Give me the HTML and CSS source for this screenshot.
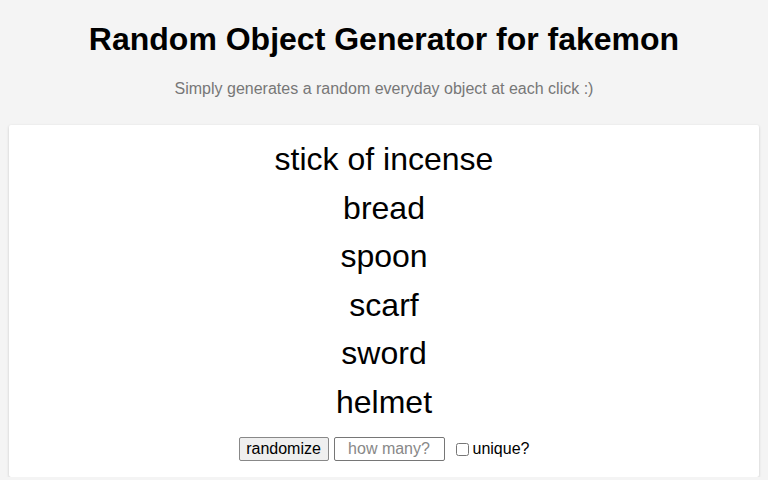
FILE: index.html
```html
<!DOCTYPE html>
<html>
<head>
<meta charset="utf-8">
<title>Random Object Generator for fakemon</title>
<link rel="stylesheet" href="styles.css">
</head>
<body>
<header class="header">
  <h1 class="title">Random Object Generator for fakemon</h1>
  <p class="subtitle">Simply generates a random everyday object at each click :)</p>
</header>
<main class="card">
  <ul class="objects">
    <li>stick of incense</li>
    <li>bread</li>
    <li>spoon</li>
    <li>scarf</li>
    <li>sword</li>
    <li>helmet</li>
  </ul>
  <div class="controls">
    <button class="btn" type="button">randomize</button>
    <input class="count" type="text" placeholder="how many?">
    <label class="unique"><input type="checkbox" class="check">unique?</label>
  </div>
</main>
</body>
</html>
```

FILE: styles.css
```css
html, body {
  margin: 0;
  padding: 0;
}
body {
  background: #f4f4f4;
  font-family: "Liberation Sans", Arial, sans-serif;
  color: #000;
  padding: 0 9px;
}
.header {
  text-align: center;
  padding-top: 21px;
}
.title {
  margin: 0;
  font-size: 32px;
  font-weight: bold;
  line-height: 37px;
}
.subtitle {
  margin: 22px 0 0;
  font-size: 16px;
  line-height: 18px;
  color: #777;
}
.card {
  margin-top: 27px;
  background: #fff;
  border-radius: 2px;
  box-shadow: 0 1px 3px rgba(0,0,0,0.18);
  padding: 10px 0 16px;
  text-align: center;
}
.objects {
  list-style: none;
  margin: 0;
  padding: 0;
}
.objects li {
  font-size: 32px;
  line-height: 48.5px;
}
.controls {
  margin-top: 11px;
  display: flex;
  justify-content: center;
  align-items: center;
  gap: 5px;
  font-size: 16px;
}
.btn {
  font-family: "Liberation Sans", Arial, sans-serif;
  font-size: 16px;
  width: 90px;
  padding: 0;
  height: 24px;
  box-sizing: border-box;
  border: 1px solid #888;
  border-radius: 2px;
  background: #efefef;
  color: #000;
}
.count {
  font-family: "Liberation Sans", Arial, sans-serif;
  font-size: 16px;
  width: 111px;
  height: 24px;
  box-sizing: border-box;
  padding: 1px 2px;
  border: 1px solid #767676;
  border-radius: 2px;
  text-align: center;
}
.count::placeholder {
  color: #888;
}
.unique {
  display: flex;
  align-items: center;
  margin-left: 6px;
}
.check {
  margin: 0 4px 0 0;
  width: 13px;
  height: 13px;
}
```
